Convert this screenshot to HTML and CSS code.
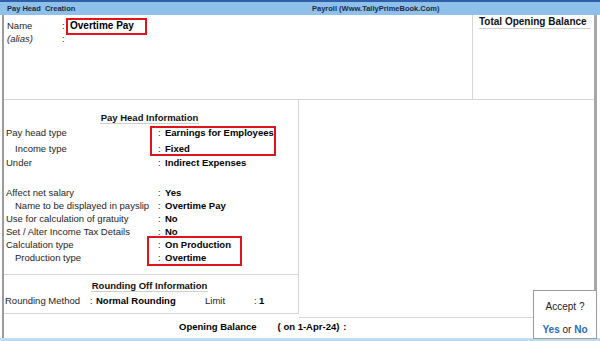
FILE: index.html
```html
<!DOCTYPE html>
<html>
<head>
<meta charset="utf-8">
<link rel="stylesheet" href="styles.css">
</head>
<body>
<div class="topline"></div>
<div class="titlebar"><span class="t-left">Pay Head&nbsp; Creation</span><span class="t-center">Payroll (Www.TallyPrimeBook.Com)</span></div>
<div class="frame">
  <div class="top">
    <div class="name-area">
      <div class="nrow"><span class="lbl">Name</span><span class="col">:</span><span class="nval">Overtime Pay</span></div>
      <div class="nrow"><span class="lbl alias">(alias)</span><span class="col">:</span><span></span></div>
    </div>
    <div class="balance"><div class="bal-title">Total Opening Balance</div></div>
    <div class="mark mark-name"></div>
  </div>
  <div class="mid">
    <div class="left">
      <div class="info">
        <div class="sec-title"><span>Pay Head Information</span></div>
        <div class="row r1"><span>Pay head type</span><span>:</span><span class="val">Earnings for Employees</span></div>
        <div class="row r2 ind"><span>Income type</span><span>:</span><span class="val">Fixed</span></div>
        <div class="row"><span>Under</span><span>:</span><span class="val">Indirect Expenses</span></div>
        <div class="gap"></div>
        <div class="row"><span>Affect net salary</span><span>:</span><span class="val">Yes</span></div>
        <div class="row ind"><span>Name to be displayed in payslip</span><span>:</span><span class="val">Overtime Pay</span></div>
        <div class="row"><span>Use for calculation of gratuity</span><span>:</span><span class="val">No</span></div>
        <div class="row"><span>Set / Alter Income Tax Details</span><span>:</span><span class="val">No</span></div>
        <div class="row"><span>Calculation type</span><span>:</span><span class="val">On Production</span></div>
        <div class="row ind"><span>Production type</span><span>:</span><span class="val">Overtime</span></div>
        <div class="mark mark-type"></div>
        <div class="mark mark-calc"></div>
      </div>
      <div class="rounding">
        <div class="sec-title small"><span>Rounding Off Information</span></div>
        <div class="rrow"><span>Rounding Method</span><span>:</span><span class="val">Normal Rounding</span><span>Limit</span><span>:</span><span class="val">1</span></div>
      </div>
    </div>
    <div class="right"></div>
  </div>
  <div class="opening"><span class="ob">Opening Balance</span><span class="on">( on 1-Apr-24)</span><span class="oc">:</span></div>
</div>
<div class="bottombar"></div>
<div class="accept">
  <div class="acc-q">Accept ?</div>
  <div class="acc-a"><span class="yn">Yes</span> or <span class="yn">No</span></div>
</div>
</body>
</html>
```
FILE: styles.css
```css
* { box-sizing: border-box; margin: 0; padding: 0; }
html, body { width: 600px; height: 341px; overflow: hidden; background: #fff; }
body { font-family: "Liberation Sans", Arial, sans-serif; color: #1e1e1e; position: relative; }

.topline { height: 2px; background: #2f5fa8; }
.titlebar { height: 13px; background: #8ec0ea; display: flex; align-items: center; padding-left: 7px; font-size: 7.5px; font-weight: bold; color: #1c2b45; line-height: 13px; }
.t-left { width: 305px; }

.frame { margin-left: 2px; width: 595px; border-left: 2px solid #9c9c9c; border-right: 3px solid #a7a7a7; }

.top { height: 85px; display: flex; border-bottom: 1px solid #d6d6d6; position: relative; }
.name-area { flex: 1; padding-top: 4px; }
.nrow { display: grid; grid-template-columns: 55px 4px auto; height: 13px; line-height: 13px; font-size: 9.5px; padding-left: 3px; }
.alias { font-style: italic; }
.nval { font-size: 10px; font-weight: bold; color: #000; padding-left: 4px; }
.balance { width: 122px; border-left: 1px solid #d6d6d6; padding-left: 6px; padding-right: 3px; }
.bal-title { font-size: 10px; font-weight: bold; line-height: 12px; margin-top: 1px; border-bottom: 1px solid #cfcfcf; color: #111; }

.mark { position: absolute; border: 2px solid #e1141c; }
.mark-name { left: 62px; top: 3px; width: 81px; height: 17px; }
.mark-type { left: 146px; top: 26px; width: 126px; height: 30px; }
.mark-calc { left: 143px; top: 136px; width: 95px; height: 30px; }

.mid { display: flex; height: 218px; }
.left { width: 295px; height: 214px; border-right: 1px solid #d6d6d6; border-bottom: 1px solid #d6d6d6; }
.info { height: 175px; border-bottom: 1px solid #d6d6d6; position: relative; }
.rounding { height: 38px; }
.right { flex: 1; height: 218px; border-bottom: 1px solid #d6d6d6; }

.sec-title { text-align: center; padding-top: 12px; padding-right: 3px; font-size: 9.5px; font-weight: bold; line-height: 11px; color: #111; }
.sec-title span { display: inline-block; border-bottom: 1px solid #d0d0d0; padding: 0 1px; }
.sec-title.small { padding-top: 5px; }

.row { display: grid; grid-template-columns: 152px 7px auto; font-size: 9.5px; line-height: 13px; padding-left: 2px; }
.row.r1 { line-height: 18px; }
.row.r2 { line-height: 14px; }
.row.ind span:first-child { padding-left: 9px; }
.gap { height: 17px; }
.val { font-weight: bold; color: #000; }

.rrow { display: grid; grid-template-columns: 85px 6px 109px 49px 5px auto; font-size: 9.5px; line-height: 13px; padding-left: 1px; margin-top: 2px; }

.opening { display: flex; height: 20px; padding-top: 2px; padding-left: 175px; line-height: 13px; font-size: 9.5px; font-weight: bold; color: #000; }
.on { margin-left: 21px; }
.oc { margin-left: 4px; }

.bottombar { height: 3px; background: #bcdcf5; }

.accept { position: absolute; left: 533px; top: 290px; width: 64px; height: 49px; border: 1px solid #9b9b9b; background: #fff; text-align: center; font-size: 10px; line-height: 13px; color: #222; padding-top: 9px; }
.acc-a { margin-top: 10px; }
.yn { color: #2c6bc0; font-weight: bold; }
```
